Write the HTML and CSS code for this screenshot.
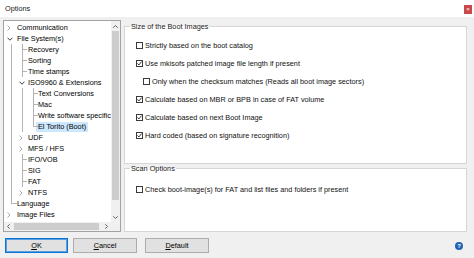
FILE: index.html
```html
<!DOCTYPE html>
<html>
<head>
<meta charset="utf-8">
<title>Options</title>
<link rel="stylesheet" href="styles.css">
</head>
<body>
<div class="window">
  <div class="titlebar">
    <span class="title">Options</span>
    <span class="close">×</span>
  </div>
  <div class="main">
    <div class="treebox">
      <div class="treeview">
        <ul class="tree l0">
          <li><div class="row d0"><span class="exp"><svg width="4" height="6" viewBox="0 0 4 6"><path d="M0.5 0.5 L3 3 L0.5 5.5" stroke="#a8a8a8" fill="none"/></svg></span><span class="lbl">Communication</span></div></li>
          <li class="fs"><div class="row d0"><span class="exp"><svg width="6" height="4" viewBox="0 0 6 4"><path d="M0.5 0.7 L3 3.2 L5.5 0.7" stroke="#3c3c3c" fill="none"/></svg></span><span class="lbl">File System(s)</span></div>
            <ul class="tree l1">
              <li class="leaf"><div class="row d1"><span class="exp none"></span><span class="lbl">Recovery</span></div></li>
              <li class="leaf"><div class="row d1"><span class="exp none"></span><span class="lbl">Sorting</span></div></li>
              <li class="leaf"><div class="row d1"><span class="exp none"></span><span class="lbl">Time stamps</span></div></li>
              <li><div class="row d1"><span class="exp"><svg width="6" height="4" viewBox="0 0 6 4"><path d="M0.5 0.7 L3 3.2 L5.5 0.7" stroke="#3c3c3c" fill="none"/></svg></span><span class="lbl">ISO9960 &amp; Extensions</span></div>
                <ul class="tree l2">
                  <li class="leaf"><div class="row d2"><span class="exp none"></span><span class="lbl">Text Conversions</span></div></li>
                  <li class="leaf"><div class="row d2"><span class="exp none"></span><span class="lbl">Mac</span></div></li>
                  <li class="leaf"><div class="row d2"><span class="exp none"></span><span class="lbl">Write software specific</span></div></li>
                  <li class="leaf"><div class="row d2 sel"><span class="exp none"></span><span class="lbl">El Torito (Boot)</span></div></li>
                </ul>
              </li>
              <li><div class="row d1"><span class="exp"><svg width="4" height="6" viewBox="0 0 4 6"><path d="M0.5 0.5 L3 3 L0.5 5.5" stroke="#a8a8a8" fill="none"/></svg></span><span class="lbl">UDF</span></div></li>
              <li><div class="row d1"><span class="exp"><svg width="4" height="6" viewBox="0 0 4 6"><path d="M0.5 0.5 L3 3 L0.5 5.5" stroke="#a8a8a8" fill="none"/></svg></span><span class="lbl">MFS / HFS</span></div></li>
              <li class="leaf"><div class="row d1"><span class="exp none"></span><span class="lbl">IFO/VOB</span></div></li>
              <li class="leaf"><div class="row d1"><span class="exp none"></span><span class="lbl">SIG</span></div></li>
              <li class="leaf"><div class="row d1"><span class="exp none"></span><span class="lbl">FAT</span></div></li>
              <li><div class="row d1"><span class="exp"><svg width="4" height="6" viewBox="0 0 4 6"><path d="M0.5 0.5 L3 3 L0.5 5.5" stroke="#a8a8a8" fill="none"/></svg></span><span class="lbl">NTFS</span></div></li>
            </ul>
          </li>
          <li class="leaf lang"><div class="row d0"><span class="exp none"></span><span class="lbl">Language</span></div></li>
          <li><div class="row d0"><span class="exp"><svg width="4" height="6" viewBox="0 0 4 6"><path d="M0.5 0.5 L3 3 L0.5 5.5" stroke="#a8a8a8" fill="none"/></svg></span><span class="lbl">Image Files</span></div></li>
        </ul>
      </div>
      <div class="vscroll">
        <span class="sb-arrow"><svg width="5" height="3" viewBox="0 0 5 3"><path d="M0.3 2.7 L2.5 0.5 L4.7 2.7" stroke="#606060" fill="none"/></svg></span>
        <span class="vthumb"></span>
        <span class="vtrack"></span>
        <span class="sb-arrow"><svg width="5" height="3" viewBox="0 0 5 3"><path d="M0.3 0.3 L2.5 2.5 L4.7 0.3" stroke="#606060" fill="none"/></svg></span>
      </div>
      <div class="hscroll">
        <span class="sb-arrow"><svg width="3" height="5" viewBox="0 0 3 5"><path d="M2.7 0.3 L0.5 2.5 L2.7 4.7" stroke="#606060" fill="none"/></svg></span>
        <span class="hthumb"></span>
        <span class="htrack"></span>
        <span class="sb-arrow"><svg width="3" height="5" viewBox="0 0 3 5"><path d="M0.3 0.3 L2.5 2.5 L0.3 4.7" stroke="#606060" fill="none"/></svg></span>
      </div>
      <div class="corner"></div>
    </div>
    <div class="pane">
      <fieldset class="group g1">
        <legend>Size of the Boot Images</legend>
        <label class="check"><span class="box"></span>Strictly based on the boot catalog</label>
        <label class="check"><span class="box on"><svg width="5" height="5" viewBox="0 0 5 5"><path d="M0.4 2.4 L1.9 4 L4.6 0.6" stroke="#222" stroke-width="0.9" fill="none"/></svg></span>Use mkisofs patched image file length if present</label>
        <label class="check indent"><span class="box"></span>Only when the checksum matches (Reads all boot image sectors)</label>
        <label class="check"><span class="box on"><svg width="5" height="5" viewBox="0 0 5 5"><path d="M0.4 2.4 L1.9 4 L4.6 0.6" stroke="#222" stroke-width="0.9" fill="none"/></svg></span>Calculate based on MBR or BPB in case of FAT volume</label>
        <label class="check"><span class="box on"><svg width="5" height="5" viewBox="0 0 5 5"><path d="M0.4 2.4 L1.9 4 L4.6 0.6" stroke="#222" stroke-width="0.9" fill="none"/></svg></span>Calculate based on next Boot Image</label>
        <label class="check"><span class="box on"><svg width="5" height="5" viewBox="0 0 5 5"><path d="M0.4 2.4 L1.9 4 L4.6 0.6" stroke="#222" stroke-width="0.9" fill="none"/></svg></span>Hard coded (based on signature recognition)</label>
      </fieldset>
      <fieldset class="group g2">
        <legend>Scan Options</legend>
        <label class="check"><span class="box"></span>Check boot-image(s) for FAT and list files and folders if present</label>
      </fieldset>
    </div>
  </div>
  <div class="footer">
    <button class="btn ok"><u>O</u>K</button>
    <button class="btn cancel"><u>C</u>ancel</button>
    <button class="btn default"><u>D</u>efault</button>
    <span class="help">?</span>
  </div>
</div>
</body>
</html>
```
FILE: styles.css
```css
* { box-sizing: border-box; }
html, body { margin: 0; padding: 0; }
body {
  width: 474px;
  height: 258px;
  overflow: hidden;
  background: #f0f0f0;
  font-family: "Liberation Sans", Arial, sans-serif;
  font-size: 7.3px;
  color: #000;
}
.window { display: flex; flex-direction: column; height: 258px; }

.titlebar {
  height: 17px;
  background: #fff;
  display: flex;
  align-items: center;
  justify-content: space-between;
  padding: 0 2px 0 5px;
}
.title { color: #1a1a1a; }
.close {
  width: 8px;
  height: 9px;
  background: #c9484a;
  color: #fff;
  font-size: 6px;
  line-height: 9px;
  text-align: center;
  margin-top: 1px;
}

.main {
  height: 216px;
  display: flex;
  gap: 3px;
  padding: 3px 7px 1px 3px;
}

/* tree */
.treebox {
  width: 118px;
  flex: none;
  border: 1px solid #a3a3a3;
  background: #fff;
  display: grid;
  grid-template-columns: 107px 9px;
  grid-template-rows: 201px 9px;
}
.treeview { overflow: hidden; padding-top: 1px; }
ul.tree { list-style: none; margin: 0; padding: 0; position: relative; }
.tree li { position: relative; }
.row {
  height: 11px;
  line-height: 11px;
  display: flex;
  align-items: center;
  white-space: nowrap;
}
.d0 { padding-left: 3px; }
.d1 { padding-left: 14px; }
.d2 { padding-left: 24px; }
.exp {
  width: 10px;
  height: 11px;
  flex: none;
  display: flex;
  align-items: center;
  padding-left: 1px;
  background: #fff;
  position: relative;
  z-index: 1;
}
.d0 .exp { padding-left: 0; }
.exp.none { background: transparent; }
.exp svg { display: block; }
.sel .lbl {
  background: #cce8ff;
  padding: 0 2px;
  margin-left: -2px;
  line-height: 10px;
  height: 10px;
}

/* tree connector lines */
ul.l1::before, ul.l2::before {
  content: "";
  position: absolute;
  top: 0;
  bottom: 5px;
  border-left: 1px solid #b4b4b4;
}
ul.l1::before { left: 18px; }
ul.l2::before { left: 29px; }
li.fs::before {
  content: "";
  position: absolute;
  left: 7px;
  top: 11px;
  bottom: 0;
  border-left: 1px solid #b4b4b4;
}
li.lang::before {
  content: "";
  position: absolute;
  left: 7px;
  top: 0;
  height: 6px;
  border-left: 1px solid #b4b4b4;
}
li.leaf::after {
  content: "";
  position: absolute;
  top: 5px;
  width: 5px;
  border-top: 1px solid #b4b4b4;
}
.l0 > li.leaf::after { left: 7px; width: 6px; }
.l1 > li.leaf::after { left: 18px; }
.l2 > li.leaf::after { left: 29px; }

/* scrollbars */
.vscroll { background: #f0f0f0; display: flex; flex-direction: column; }
.sb-arrow {
  height: 10px;
  flex: none;
  display: flex;
  align-items: center;
  justify-content: center;
}
.vthumb { height: 169px; margin: 0 1px; background: #cdcdcd; flex: none; }
.vtrack { flex: 1; }
.hscroll { background: #f0f0f0; display: flex; }
.hscroll .sb-arrow { width: 9px; height: 9px; }
.hthumb { width: 85px; margin: 1px 0 1px 1px; background: #cdcdcd; flex: none; }
.htrack { flex: 1; }
.corner { background: #f0f0f0; }

/* right pane */
.pane { flex: 1; display: flex; flex-direction: column; min-width: 0; padding-bottom: 0; }
.group {
  margin: 0;
  min-width: 0;
  border: 1px solid #d6d6d6;
  background: #fff;
  padding: 4px 0 19px 11px;
}
.group legend {
  padding: 2px 1px 0 1px;
  margin-left: -6px;
  line-height: 10px;
  color: #1a1a1a;
}
.g2 { flex: 1; margin-top: -2px; padding-top: 6px; padding-bottom: 0; }
.check {
  display: flex;
  align-items: center;
  height: 18px;
  white-space: nowrap;
  color: #111;
}
.check.indent { padding-left: 7px; }
.box {
  width: 7px;
  height: 7px;
  flex: none;
  border: 1px solid #3a3a3a;
  background: #fff;
  margin-right: 2px;
  display: flex;
  align-items: center;
  justify-content: center;
}
.box svg { display: block; }

/* footer */
.footer {
  flex: 1;
  display: flex;
  align-items: flex-start;
  padding: 5px 11px 0 5px;
}
.btn {
  font: inherit;
  color: #000;
  height: 15px;
  width: 63px;
  padding: 0;
  background: #e1e1e1;
  border: 1px solid #adadad;
  line-height: 13px;
  text-align: center;
}
.btn.ok { border-color: #0a74d2; box-shadow: inset 0 0 0 1px #5b9fe0; }
.btn.cancel { margin-left: 5px; width: 64px; }
.btn.default { margin-left: 8px; width: 64px; }
.help {
  margin-left: auto;
  margin-top: 4px;
  width: 8px;
  height: 8px;
  border-radius: 50%;
  background: #1f63b5;
  color: #fff;
  font-size: 6px;
  font-weight: bold;
  line-height: 8px;
  text-align: center;
}
```
